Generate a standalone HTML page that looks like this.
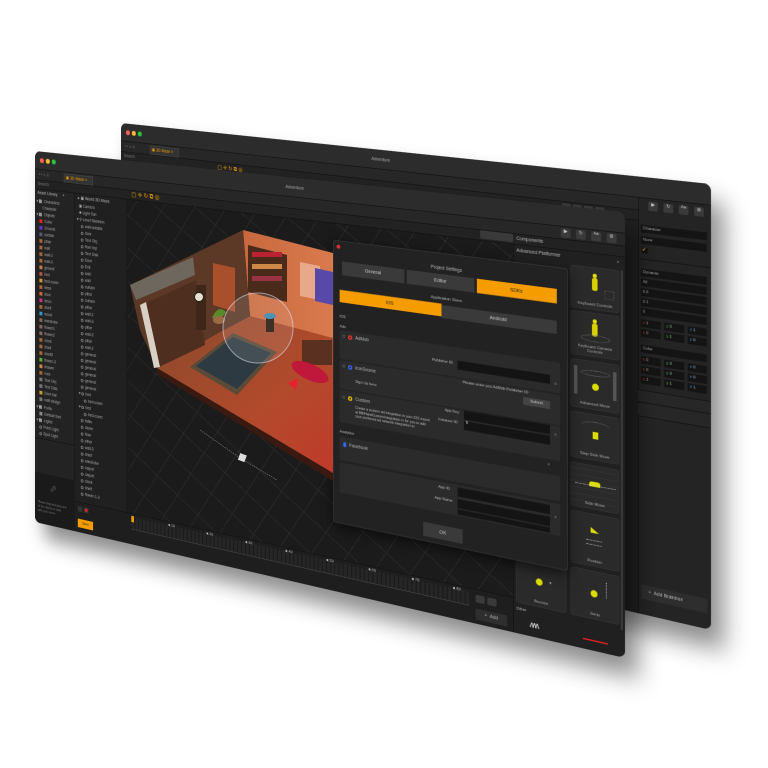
<!DOCTYPE html>
<html><head><meta charset="utf-8"><style>
*{margin:0;padding:0;box-sizing:border-box}
body{width:768px;height:768px;background:#fff;overflow:hidden;position:relative;font-family:"Liberation Sans",sans-serif}
.win{position:absolute;left:0;top:0;width:1000px;height:620px;transform-origin:0 0;
transform:matrix3d(0.4849,0.02535,0,-0.00016816,0,0.598387,0,0,0,0,1,0,35,151,0,1);
background:#1c1c1c;border-radius:10px;overflow:hidden;box-shadow:18px 24px 34px rgba(0,0,0,.45);color:#bbb;font-size:7px}
.a{position:absolute}
.tb{left:0;top:0;width:1000px;height:30px;background:#2c2c2c;border-bottom:1px solid #111}
.tl{top:11px;width:8px;height:8px;border-radius:50%}
.r2{left:0;top:30px;width:1000px;height:18px;background:#272727;border-bottom:1px solid #111}
.r3{left:0;top:48px;width:1000px;height:15px;background:#222;border-bottom:1px solid #111}
.asset{left:0;top:63px;width:80px;height:557px;background:#232323;border-right:1px solid #111}
.hier{left:80px;top:63px;width:102px;height:507px;background:#202020;border-right:1px solid #111}
.vp{left:182px;top:63px;width:655px;height:507px;background:
repeating-linear-gradient(33deg,transparent 0 44px,#2d2d2d 44px 45px),
repeating-linear-gradient(-57deg,transparent 0 44px,#2d2d2d 44px 45px),#1b1b1b}
.comp{left:837px;top:63px;width:163px;height:557px;background:#202020;border-left:1px solid #111}
.row{position:absolute;height:11px;line-height:11px;font-size:6.5px;color:#aaa;white-space:nowrap}
.ico{display:inline-block;width:5px;height:5px;border-radius:50%;border:1px solid #bbb;margin-right:3px;vertical-align:middle}
.sq{display:inline-block;width:6px;height:6px;margin-right:4px;vertical-align:middle}
.card{position:absolute;background:#2a2a2a;border-radius:3px;border:1px solid #333}
.card .lb{position:absolute;bottom:3px;left:0;right:0;text-align:center;font-size:6px;color:#aaa}
.fig{position:absolute;width:8px;height:18px;background:#d8d000;border-radius:3px}
.fig:before{content:"";position:absolute;left:1px;top:-6px;width:6px;height:6px;border-radius:50%;background:#e8e000}
.dlg{left:551px;top:88px;width:367px;height:455px;background:#222;border:1px solid #3a3a3a;border-radius:4px;box-shadow:0 6px 20px rgba(0,0,0,.6);transform:scaleY(0.94);transform-origin:0 0}
.btn{position:absolute;height:22px;line-height:22px;text-align:center;font-size:7.5px;color:#ccc;background:#3a3a3a}
.or{background:#f59c00;color:#222}
.dc{position:absolute;left:10px;right:10px;background:#2b2b2b;border-radius:3px}
.fld{position:absolute;background:#141414;height:14px}
.t{position:absolute;font-size:7px;color:#bbb;white-space:nowrap}
.ib{position:absolute;top:2px;width:14px;height:13px;background:#3a3a3a;border-radius:2px}
.ins{position:absolute;left:4px;right:6px;height:11px;background:#141414;font-size:6px;line-height:11px;padding-left:3px;color:#aaa}
</style></head><body>

<!-- BACK WINDOW -->
<div class="a" style="left:0;top:0;transform:translate(86px,-28px)">
<div class="win">
 <div class="a tb"></div>
 <div class="a tl" style="left:10px;background:#ff5f57"></div><div class="a tl" style="left:22px;background:#febc2e"></div><div class="a tl" style="left:34px;background:#28c840"></div>
 <div class="t" style="left:470px;top:12px;color:#aaa">Adventure</div>
 <div class="a r2"></div>
 <div class="t" style="left:8px;top:34px;color:#888">‹ › ⌂ ⚠</div>
 <div class="a" style="left:58px;top:32px;width:58px;height:15px;background:#333;border:1px solid #444"></div>
 <div class="t" style="left:62px;top:35px;color:#f5a000">▣ 3D Maze ×</div>
 <div class="a r3"></div>
 <div class="t" style="left:6px;top:51px;color:#777">Search</div>
 <div class="t" style="left:190px;top:50px;color:#f5a000;font-size:9px">▢ ✛ ↻ ⧉ ◎</div>
 <div class="a asset"></div><div class="a hier"></div><div class="a vp"></div>
 <div class="t" style="left:5px;top:66px">Asset Library &nbsp;&nbsp;&nbsp;&nbsp;+</div>
 <div class="t" style="left:86px;top:66px">▸ ▣ World 3D Maze</div>
 <div class="a" style="left:760px;top:63px;width:135px;height:557px;background:#202020;border-left:1px solid #111"></div>
 <div class="a" style="left:895px;top:30px;width:105px;height:590px;background:#242424;border-left:1px solid #111"></div>
 <div class="ib" style="left:780px;top:50px"></div><div class="ib" style="left:797px;top:50px"></div><div class="ib" style="left:814px;top:50px"></div><div class="ib" style="left:831px;top:50px"></div>
 <div class="ib" style="left:910px;top:34px;color:#ccc;font-size:7px;text-align:center">▶</div><div class="ib" style="left:932px;top:34px;color:#ccc;font-size:7px;text-align:center">↻</div><div class="ib" style="left:954px;top:34px;color:#ccc;font-size:6px;text-align:center">Aa</div><div class="ib" style="left:976px;top:34px;color:#ccc;font-size:7px;text-align:center">⚙</div>
 <div class="a" style="left:895px;top:56px;width:105px;height:500px">
  <div class="ins" style="top:12px">Character</div>
  <div class="ins" style="top:28px">None</div>
  <div class="a" style="left:6px;top:44px;width:8px;height:8px;background:#111;color:#f5a000;font-size:7px;line-height:8px">✔</div>
  <div class="a" style="left:0;top:60px;width:105px;height:1px;background:#111"></div>
  <div class="ins" style="top:74px">Dynamic</div>
  <div class="ins" style="top:88px">All</div>
  <div class="ins" style="top:102px">0.6</div>
  <div class="ins" style="top:116px">0.1</div>
  <div class="ins" style="top:130px">0</div>
  <div class="ins" style="top:146px;right:72px"><span style="color:#e33">x</span> 1</div><div class="ins" style="top:146px;left:38px;right:38px"><span style="color:#3c3">y</span> 0</div><div class="ins" style="top:146px;left:72px"><span style="color:#39f">z</span> 1</div>
  <div class="ins" style="top:160px;right:72px"><span style="color:#e33">x</span> 0</div><div class="ins" style="top:160px;left:38px;right:38px"><span style="color:#3c3">y</span> 1</div><div class="ins" style="top:160px;left:72px"><span style="color:#39f">z</span> 0</div>
  <div class="ins" style="top:182px">Cube</div>
  <div class="ins" style="top:198px;right:72px"><span style="color:#e33">x</span> 0</div><div class="ins" style="top:198px;left:38px;right:38px"><span style="color:#3c3">y</span> 0</div><div class="ins" style="top:198px;left:72px"><span style="color:#39f">z</span> 0</div>
  <div class="ins" style="top:212px;right:72px"><span style="color:#e33">x</span> 0</div><div class="ins" style="top:212px;left:38px;right:38px"><span style="color:#3c3">y</span> 0</div><div class="ins" style="top:212px;left:72px"><span style="color:#39f">z</span> 0</div>
  <div class="ins" style="top:226px;right:72px"><span style="color:#e33">x</span> 1</div><div class="ins" style="top:226px;left:38px;right:38px"><span style="color:#3c3">y</span> 1</div><div class="ins" style="top:226px;left:72px"><span style="color:#39f">z</span> 1</div>
  <div class="a" style="left:0;top:246px;width:105px;height:18px;background:#272727;border-top:1px solid #111;border-bottom:1px solid #111"></div>
  <div class="a" style="left:0;top:266px;width:105px;height:18px;background:#272727;border-bottom:1px solid #111"></div>
 </div>
 <div class="a" style="left:900px;top:578px;width:95px;height:20px;background:#2e2e2e;font-size:7px;line-height:20px;padding-left:10px;color:#bbb">+ &nbsp;Add Brainbox</div>
</div>
</div>

<!-- FRONT WINDOW -->
<div class="win">
 <div class="a tb"></div>
 <div class="a tl" style="left:10px;background:#ff5f57"></div><div class="a tl" style="left:22px;background:#febc2e"></div><div class="a tl" style="left:34px;background:#28c840"></div>
 <div class="t" style="left:470px;top:12px;color:#aaa">Adventure</div>
 <div class="a r2"></div>
 <div class="t" style="left:8px;top:34px;color:#888">‹ › ⌂ ⚠</div>
 <div class="a" style="left:58px;top:32px;width:58px;height:15px;background:#333;border:1px solid #444"></div>
 <div class="t" style="left:62px;top:35px;color:#f5a000">▣ 3D Maze ×</div>
 <div class="ib" style="left:908px;top:32px;color:#ccc;font-size:7px;text-align:center">▶</div><div class="ib" style="left:930px;top:32px;color:#ccc;font-size:7px;text-align:center">↻</div><div class="ib" style="left:952px;top:32px;color:#ccc;font-size:6px;text-align:center">Aa</div><div class="ib" style="left:974px;top:32px;color:#ccc;font-size:7px;text-align:center">⚙</div>
 <div class="a r3"></div>
 <div class="t" style="left:6px;top:51px;color:#777">Search</div>
 <div class="t" style="left:190px;top:49px;color:#f5a000;font-size:10px">▢ ✛ ↻ ⧉ ◎</div>
 <div class="ib" style="left:787px;top:48px;height:12px"></div><div class="ib" style="left:799px;top:48px;height:12px"></div><div class="ib" style="left:811px;top:48px;height:12px"></div><div class="ib" style="left:823px;top:48px;height:12px"></div>
 <div class="t" style="left:842px;top:51px">Components</div>
 <div class="a asset"></div><div class="a hier"></div><div class="a vp"></div><div class="a comp"></div>
 <div class="t" style="left:5px;top:66px">Asset Library &nbsp;&nbsp;&nbsp;&nbsp;+</div>
 <div class="t" style="left:86px;top:66px">▸ ▣ World 3D Maze</div>
 <div class="t" style="left:842px;top:68px">Advanced Platformer</div><div class="t" style="left:988px;top:68px;color:#888">×</div>
 <div class="a" style="left:3px;top:78px;width:76px">
  <div class="row" style="top:0">▾ <span class="sq" style="background:#999"></span>Characters</div>
  <div class="row" style="top:11px;left:12px">Character</div>
  <div class="row" style="top:22px">▾ <span class="sq" style="background:#999"></span>Objects</div>
  <div class="row" style="top:33px;left:6px"><span class="sq" style="background:#e22"></span>Cube</div>
  <div class="row" style="top:44px;left:6px"><span class="sq" style="background:#63c"></span>Ground</div>
  <div class="row" style="top:55px;left:6px"><span class="sq" style="background:#557"></span>curtain</div>
  <div class="row" style="top:66px;left:6px"><span class="sq" style="background:#a63"></span>pillar</div>
  <div class="row" style="top:77px;left:6px"><span class="sq" style="background:#a63"></span>wall</div>
  <div class="row" style="top:88px;left:6px"><span class="sq" style="background:#a63"></span>wall-2</div>
  <div class="row" style="top:99px;left:6px"><span class="sq" style="background:#a63"></span>wall-3</div>
  <div class="row" style="top:110px;left:6px"><span class="sq" style="background:#c74"></span>ground</div>
  <div class="row" style="top:121px;left:6px"><span class="sq" style="background:#b54"></span>bed</div>
  <div class="row" style="top:132px;left:6px"><span class="sq" style="background:#c93"></span>bed-cover</div>
  <div class="row" style="top:143px;left:6px"><span class="sq" style="background:#a63"></span>desk</div>
  <div class="row" style="top:154px;left:6px"><span class="sq" style="background:#c63"></span>door</div>
  <div class="row" style="top:165px;left:6px"><span class="sq" style="background:#c38"></span>deco</div>
  <div class="row" style="top:176px;left:6px"><span class="sq" style="background:#a63"></span>shelf</div>
  <div class="row" style="top:187px;left:6px"><span class="sq" style="background:#39c"></span>wood</div>
  <div class="row" style="top:198px;left:6px"><span class="sq" style="background:#865"></span>wardrobe</div>
  <div class="row" style="top:209px;left:6px"><span class="sq" style="background:#865"></span>flower1</div>
  <div class="row" style="top:220px;left:6px"><span class="sq" style="background:#865"></span>flower2</div>
  <div class="row" style="top:231px;left:6px"><span class="sq" style="background:#a63"></span>clock</div>
  <div class="row" style="top:242px;left:6px"><span class="sq" style="background:#a63"></span>chair</div>
  <div class="row" style="top:253px;left:6px"><span class="sq" style="background:#a63"></span>shelf2</div>
  <div class="row" style="top:264px;left:6px"><span class="sq" style="background:#6a3"></span>flower-3</div>
  <div class="row" style="top:275px;left:6px"><span class="sq" style="background:#c84"></span>drawer</div>
  <div class="row" style="top:286px;left:6px"><span class="sq" style="background:#a63"></span>rock</div>
  <div class="row" style="top:297px;left:6px"><span class="sq" style="background:#777"></span>Text Obj</div>
  <div class="row" style="top:308px;left:6px"><span class="sq" style="background:#777"></span>Text Disk</div>
  <div class="row" style="top:319px;left:6px"><span class="sq" style="background:#c93"></span>Door bar</div>
  <div class="row" style="top:330px;left:6px"><span class="sq" style="background:#777"></span>wall design</div>
  <div class="row" style="top:343px">▾ <span class="sq" style="background:#999"></span>Fonts</div>
  <div class="row" style="top:354px;left:6px"><span class="sq" style="background:#888"></span>Default font</div>
  <div class="row" style="top:365px">▾ <span class="sq" style="background:#999"></span>Lights</div>
  <div class="row" style="top:376px;left:6px"><span class="ico"></span>Point Light</div>
  <div class="row" style="top:387px;left:6px"><span class="ico"></span>Spot Light</div>
 </div>
 <div class="a" style="left:0;top:478px;width:80px;height:1px;background:#111"></div>
 <div class="a" style="left:0;top:536px;width:80px;height:84px;background:#1a1a1a"></div>
 <div class="t" style="left:30px;top:548px;font-size:16px;color:#666">⬀</div>
 <div class="t" style="left:6px;top:582px;font-size:5px;color:#777;line-height:7px">Please drag and drop one<br>of the objects to start<br>with your scene</div>
 <div class="a" style="left:84px;top:78px;width:96px;height:490px;overflow:hidden">
  <div class="row" style="top:0;left:4px">▣ Camera</div>
  <div class="row" style="top:11px;left:4px">✹ Light Sun</div>
  <div class="row" style="top:22px">▾ ⚲ Level Skeleton</div>
  <div class="row" style="top:33px;left:8px"><span class="ico"></span>wall-outside</div>
  <div class="row" style="top:44px;left:8px"><span class="ico"></span>door</div>
  <div class="row" style="top:55px;left:8px"><span class="ico"></span>Text Obj</div>
  <div class="row" style="top:66px;left:8px"><span class="ico"></span>floor-top</div>
  <div class="row" style="top:77px;left:8px"><span class="ico"></span>Text Disk</div>
  <div class="row" style="top:88px;left:8px"><span class="ico"></span>Door</div>
  <div class="row" style="top:99px;left:8px"><span class="ico"></span>Exit</div>
  <div class="row" style="top:110px;left:8px"><span class="ico"></span>wall</div>
  <div class="row" style="top:121px;left:8px"><span class="ico"></span>wall</div>
  <div class="row" style="top:132px;left:8px"><span class="ico"></span>curtain</div>
  <div class="row" style="top:143px;left:8px"><span class="ico"></span>pillar</div>
  <div class="row" style="top:154px;left:8px"><span class="ico"></span>curtain</div>
  <div class="row" style="top:165px;left:8px"><span class="ico"></span>pillar</div>
  <div class="row" style="top:176px;left:8px"><span class="ico"></span>wall-2</div>
  <div class="row" style="top:187px;left:8px"><span class="ico"></span>wall-3</div>
  <div class="row" style="top:198px;left:8px"><span class="ico"></span>pillar</div>
  <div class="row" style="top:209px;left:8px"><span class="ico"></span>wall-3</div>
  <div class="row" style="top:220px;left:8px"><span class="ico"></span>pillar</div>
  <div class="row" style="top:231px;left:8px"><span class="ico"></span>wall-2</div>
  <div class="row" style="top:242px;left:8px"><span class="ico"></span>general</div>
  <div class="row" style="top:253px;left:8px"><span class="ico"></span>general</div>
  <div class="row" style="top:264px;left:8px"><span class="ico"></span>general</div>
  <div class="row" style="top:275px;left:8px"><span class="ico"></span>general</div>
  <div class="row" style="top:286px;left:8px"><span class="ico"></span>general</div>
  <div class="row" style="top:297px;left:8px"><span class="ico"></span>general</div>
  <div class="row" style="top:308px;left:4px">▾ <span class="ico"></span>bed</div>
  <div class="row" style="top:319px;left:14px"><span class="ico"></span>bed-cover</div>
  <div class="row" style="top:330px;left:4px">▾ <span class="ico"></span>bed</div>
  <div class="row" style="top:341px;left:14px"><span class="ico"></span>bed-cover</div>
  <div class="row" style="top:352px;left:8px"><span class="ico"></span>table</div>
  <div class="row" style="top:363px;left:8px"><span class="ico"></span>stone</div>
  <div class="row" style="top:374px;left:8px"><span class="ico"></span>floor</div>
  <div class="row" style="top:385px;left:8px"><span class="ico"></span>pillar</div>
  <div class="row" style="top:396px;left:8px"><span class="ico"></span>wall-3</div>
  <div class="row" style="top:407px;left:8px"><span class="ico"></span>shelf</div>
  <div class="row" style="top:418px;left:8px"><span class="ico"></span>wardrobe</div>
  <div class="row" style="top:429px;left:8px"><span class="ico"></span>carpet</div>
  <div class="row" style="top:440px;left:8px"><span class="ico"></span>carpet</div>
  <div class="row" style="top:451px;left:8px"><span class="ico"></span>clock</div>
  <div class="row" style="top:462px;left:8px"><span class="ico"></span>shelf</div>
  <div class="row" style="top:473px;left:8px"><span class="ico"></span>flower-1-2</div>
 </div>
 <div class="a" style="left:80px;top:570px;width:757px;height:50px;background:#1e1e1e;border-top:1px solid #111"></div>
 <div class="a" style="left:86px;top:577px;width:9px;height:9px;background:#333"></div>
 <div class="a" style="left:98px;top:577px;width:9px;height:9px;background:#333"></div>
 <div class="a" style="left:100px;top:579px;width:5px;height:5px;background:#d22"></div>
 <div class="a" style="left:190px;top:576px;width:580px;height:20px;background:repeating-linear-gradient(90deg,#1b1b1b 0 1px,#262626 1px 6px,#1b1b1b 6px 7px);border-bottom:1px solid #444"></div>
 <div class="a" style="left:190px;top:574px;width:5px;height:10px;background:#f5a000"></div>
 <div class="t" style="left:260px;top:573px;font-size:6px">■ 10</div><div class="t" style="left:330px;top:573px;font-size:6px">■ 20</div><div class="t" style="left:400px;top:573px;font-size:6px">■ 30</div><div class="t" style="left:470px;top:573px;font-size:6px">■ 40</div><div class="t" style="left:540px;top:573px;font-size:6px">■ 50</div><div class="t" style="left:610px;top:573px;font-size:6px">■ 60</div><div class="t" style="left:680px;top:573px;font-size:6px">■ 70</div><div class="t" style="left:745px;top:573px;font-size:6px">■ 80</div>
 <div class="ib" style="left:780px;top:578px;height:11px"></div><div class="ib" style="left:798px;top:578px;height:11px"></div>
 <div class="a or" style="left:86px;top:598px;width:30px;height:14px;font-size:6px;line-height:14px;text-align:center">Start</div>
 <div class="a" style="left:780px;top:598px;width:48px;height:16px;background:#2e2e2e;font-size:7px;line-height:16px;text-align:center">+ &nbsp;Add</div>
 <div class="card" style="left:922px;top:82px;width:70px;height:60px"><div class="fig" style="left:30px;top:14px"></div><div class="a" style="left:48px;top:30px;width:14px;height:12px;border:1px dotted #555"></div><div class="lb">Keyboard Controls</div></div>
 <div class="card" style="left:922px;top:146px;width:70px;height:62px"><div class="fig" style="left:30px;top:14px"></div><div class="a" style="left:14px;top:30px;width:42px;height:10px;border:1px dotted #888;border-radius:50%"></div><div class="lb">Keyboard Camera Controls</div></div>
 <div class="card" style="left:922px;top:214px;width:70px;height:68px"><div class="a" style="left:4px;top:8px;width:5px;height:40px;background:#555"></div><div class="a" style="left:60px;top:10px;width:5px;height:40px;background:#555"></div><div class="a" style="left:30px;top:30px;width:10px;height:10px;border-radius:50%;background:#dd0"></div><div class="a" style="left:14px;top:12px;width:42px;height:8px;border:1px dotted #888;border-radius:50%"></div><div class="lb">Advanced Move</div></div>
 <div class="card" style="left:922px;top:288px;width:70px;height:65px"><div class="a" style="left:31px;top:24px;width:8px;height:10px;background:#dd0"></div><div class="a" style="left:14px;top:10px;width:42px;height:14px;border-top:1px dotted #888;border-radius:50%"></div><div class="lb">Step Side Move</div></div>
 <div class="card" style="left:922px;top:360px;width:70px;height:62px;background:repeating-linear-gradient(0deg,#2a2a2a 0 8px,#333 8px 9px)"><div class="a" style="left:26px;top:22px;width:16px;height:7px;background:#dd0;border-radius:4px 4px 0 0"></div><div class="a" style="left:6px;top:27px;width:58px;border-top:1px dotted #ccc"></div><div class="lb">Side Move</div></div>
 <div class="card" style="left:922px;top:428px;width:70px;height:74px"><div class="a" style="left:28px;top:18px;width:0;height:0;border-left:12px solid #dd0;border-top:8px solid transparent"></div><div class="a" style="left:22px;top:36px;width:22px;border-top:1px dotted #ccc"></div><div class="a" style="left:22px;top:42px;width:22px;border-top:1px dotted #ccc"></div><div class="lb">Position</div></div>
 <div class="card" style="left:922px;top:508px;width:70px;height:68px"><div class="a" style="left:28px;top:26px;width:10px;height:10px;border-radius:50%;background:#dd0"></div><div class="a" style="left:50px;top:12px;width:1px;height:22px;border-left:1px dotted #ccc"></div><div class="lb">Jump</div></div>
 <div class="card" style="left:842px;top:512px;width:74px;height:64px"><div class="a" style="left:28px;top:22px;width:10px;height:10px;border-radius:50%;background:#dd0"></div><div class="t" style="left:48px;top:22px;font-size:6px">▾</div><div class="lb">Bounce</div></div>
 <div class="t" style="left:842px;top:582px;font-size:6px">Other</div>
 <div class="t" style="left:862px;top:596px;font-size:12px;color:#eee;letter-spacing:-2px">ʌʌʌ</div>
 <div class="a" style="left:940px;top:605px;width:36px;height:2px;background:#e02020"></div>
 <div class="a" style="left:994px;top:82px;width:3px;height:500px;background:#3a3a3a"></div>
 <div class="a dlg">
  <div class="a" style="left:5px;top:6px;width:6px;height:6px;border-radius:50%;background:#e33"></div>
  <div class="t" style="left:0;right:0;top:20px;text-align:center">Project Settings</div>
  <div class="btn" style="left:14px;top:32px;width:102px">General</div>
  <div class="btn" style="left:120px;top:32px;width:106px">Editor</div>
  <div class="btn or" style="left:230px;top:32px;width:120px">SDKs</div>
  <div class="t" style="left:0;right:0;top:66px;text-align:center;font-size:6.5px">Application Store</div>
  <div class="btn or" style="left:10px;top:78px;width:165px;height:20px;line-height:20px">iOS</div>
  <div class="btn" style="left:175px;top:80px;width:175px;height:20px;line-height:20px">Android</div>
  <div class="t" style="left:10px;top:118px;font-size:6px">iOS</div>
  <div class="t" style="left:10px;top:134px;font-size:6px">Ads</div>
  <div class="dc" style="top:143px;height:46px"><div class="t" style="left:4px;top:6px;color:#777">⠿</div><div class="a" style="left:14px;top:6px;width:7px;height:7px;border:2px solid #e33;border-radius:50%"></div><div class="t" style="left:26px;top:6px">AdMob</div><div class="t" style="left:150px;top:22px;font-size:6px">Publisher ID</div><div class="fld" style="left:190px;top:20px;width:140px"></div><div class="t" style="left:336px;top:30px;color:#888">×</div></div>
  <div class="dc" style="top:191px;height:46px"><div class="t" style="left:4px;top:6px;color:#777">⠿</div><div class="a" style="left:14px;top:6px;width:7px;height:7px;border:2px solid #36e;border-radius:50%"></div><div class="t" style="left:26px;top:6px">ironSource</div><div class="t" style="left:198px;top:2px;font-size:6px">Please enter you AdMob Publisher ID</div><div class="btn" style="left:290px;top:12px;width:40px;height:12px;line-height:12px;font-size:6px;background:#444">Submit</div><div class="t" style="left:26px;top:28px;font-size:6px">Sign Up here</div></div>
  <div class="dc" style="top:239px;height:52px"><div class="t" style="left:4px;top:8px;color:#777">⠿</div><div class="a" style="left:14px;top:8px;width:7px;height:7px;border:2px solid #eb0;border-radius:50%"></div><div class="t" style="left:26px;top:8px">Custom</div><div class="t" style="left:170px;top:2px;font-size:6px">App Key</div><div class="fld" style="left:200px;top:0;width:130px"></div><div class="t" style="left:160px;top:18px;font-size:6px">Instance ID</div><div class="fld" style="left:200px;top:16px;width:130px;font-size:6px;padding-left:3px;color:#ccc">$</div><div class="t" style="left:336px;top:10px;color:#888">×</div><div class="t" style="left:26px;top:22px;font-size:5.5px;line-height:7px">Create a custom ad integration in your iOS export<br>at BBIHandCustomIntegration.m for you to add<br>your preferred ad network integration to</div></div>
  <div class="t" style="left:336px;top:296px;color:#888">×</div>
  <div class="t" style="left:10px;top:304px;font-size:6px">Analytics</div>
  <div class="dc" style="top:314px;height:38px"><div class="a" style="left:6px;top:8px;width:5px;height:8px;border-radius:3px;background:#36f"></div><div class="t" style="left:16px;top:9px">Facebook</div></div>
  <div class="dc" style="top:356px;height:48px"><div class="t" style="left:160px;top:6px;font-size:6px">App ID</div><div class="fld" style="left:190px;top:4px;width:140px"></div><div class="t" style="left:154px;top:24px;font-size:6px">App Name</div><div class="fld" style="left:190px;top:22px;width:140px"></div><div class="t" style="left:336px;top:18px;color:#888">×</div><div class="fld" style="left:190px;top:38px;width:140px;height:8px"></div></div>
  <div class="btn" style="left:146px;top:424px;width:62px;height:22px">OK</div>
 </div>
</div>

<svg class="a" style="left:0;top:0" width="768" height="768" viewBox="0 0 768 768">
 <defs>
  <linearGradient id="fl" x1="0" y1="0" x2="1" y2="1"><stop offset="0" stop-color="#8a4a2c"/><stop offset=".6" stop-color="#b24a2c"/><stop offset="1" stop-color="#c03a2a"/></linearGradient>
  <linearGradient id="bw" x1="0" y1="0" x2="1" y2="0"><stop offset="0" stop-color="#c8683e"/><stop offset="1" stop-color="#d87a4e"/></linearGradient>
 </defs>
 <polygon points="157,368 333,473 333,481 157,374" fill="#3a1a10"/>
 <polygon points="157,368 218,333 252,315 333,335 333,473" fill="url(#fl)"/>
 <polygon points="243,230 333,253 333,338 250,316" fill="url(#bw)"/>
 <polygon points="130,285 243,230 250,316 218,333 157,368 140,330" fill="#5c3826"/>
 <polygon points="130,285 193,257 195,275 136,300" fill="#6e675e"/>
 <polygon points="142,305 196,280 205,345 157,368" fill="#4e2e1e"/>
 <polygon points="140,305 146,302 160,367 154,368" fill="#d8d0c4"/>
 <rect x="196" y="285" width="10" height="45" fill="#3e2618"/>
 <circle cx="199" cy="297" r="4.5" fill="#e8e0d0" stroke="#222"/>
 <polygon points="213,263 235,268 235,312 213,305" fill="#a8502c"/>
 <polygon points="248,245 287,255 287,302 248,292" fill="#4a2a1a"/>
 <rect x="252" y="252" width="30" height="5" fill="#b23"/><rect x="252" y="264" width="30" height="5" fill="#c84"/><rect x="252" y="276" width="30" height="5" fill="#934"/>
 <polygon points="300,262 320,266 320,300 300,296" fill="#e8a88a"/>
 <polygon points="315,268 333,272 333,305 315,301" fill="#5848a8"/>
 <polygon points="190,367 233,333 277,352 237,395" fill="#5a4a38"/>
 <polygon points="196,366 233,337 271,353 237,389" fill="#2e3a42"/>
 <path d="M212,318 q6,-14 14,-6 q-4,8 -14,6z" fill="#5a8a2a"/>
 <ellipse cx="219" cy="320" rx="6" ry="4" fill="#9a6a44"/>
 <rect x="266" y="316" width="8" height="16" fill="#2a1a12"/><ellipse cx="270" cy="316" rx="6" ry="3" fill="#3a86b0"/>
 <rect x="302" y="340" width="30" height="25" fill="#5a3020"/>
 <ellipse cx="310" cy="372" rx="20" ry="8" transform="rotate(25 310 372)" fill="#c0183a"/>
 <polygon points="288,383 298,378 296,390" fill="#e82030"/>
 <circle cx="258" cy="328" r="35" fill="rgba(255,255,255,0.1)" stroke="rgba(230,230,255,0.55)" stroke-width="1"/>
 <polyline points="200,430 240,458 277,480" fill="none" stroke="#777" stroke-width=".7" stroke-dasharray="1.5,1"/>
 <rect x="239" y="454" width="7" height="7" fill="#ddd" transform="rotate(20 242 457)"/>
</svg>
</body></html>
